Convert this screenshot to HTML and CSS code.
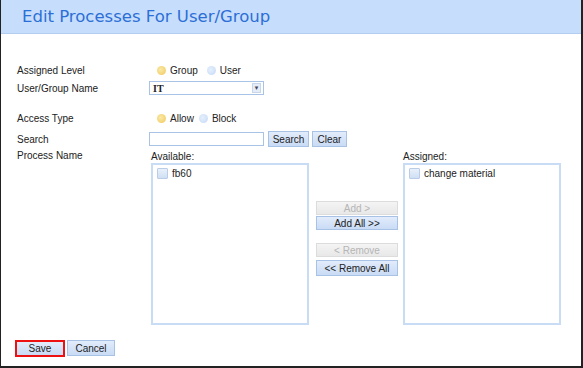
FILE: index.html
```html
<!DOCTYPE html>
<html lang="en">

<head>
    <meta charset="UTF-8">
    <title>Edit Processes For User/Group</title>
    <link rel="stylesheet" href="styles.css">
</head>

<body>
    <div class="page">
        <div class="header">
            <h1>Edit Processes For User/Group</h1>
        </div>

        <div class="content">
            <!-- niveau -->
            <div class="row row-level">
                <div class="label">Assigned Level</div>
                <div class="field">
                    <span class="radio checked"></span><span class="opt">Group</span>
                    <span class="radio"></span><span class="opt">User</span>
                </div>
            </div>

            <div class="row row-name">
                <div class="label">User/Group Name</div>
                <div class="field">
                    <div class="select">
                        <span>IT</span>
                        <span class="arrow">&#9662;</span>
                    </div>
                </div>
            </div>

            <div class="row row-access">
                <div class="label">Access Type</div>
                <div class="field">
                    <span class="radio checked"></span><span class="opt opt-tight">Allow</span>
                    <span class="radio"></span><span class="opt">Block</span>
                </div>
            </div>

            <div class="row row-search">
                <div class="label">Search</div>
                <div class="field">
                    <div class="text-input"></div>
                    <button class="btn btn-search">Search</button>
                    <button class="btn btn-clear">Clear</button>
                </div>
            </div>

            <div class="row row-process">
                <div class="label">Process Name</div>
                <div class="picker">
                    <div class="list-col">
                        <div class="list-title">Available:</div>
                        <div class="list-box">
                            <div class="item"><span class="check"></span>fb60</div>
                        </div>
                    </div>

                    <div class="mid-col">
                        <button class="btn btn-mid" disabled>Add &gt;</button>
                        <button class="btn btn-mid">Add All &gt;&gt;</button>
                        <button class="btn btn-mid btn-gap" disabled>&lt; Remove</button>
                        <button class="btn btn-mid">&lt;&lt; Remove All</button>
                    </div>

                    <div class="list-col list-right">
                        <div class="list-title">Assigned:</div>
                        <div class="list-box">
                            <div class="item"><span class="check"></span>change material</div>
                        </div>
                    </div>
                </div>
            </div>

            <div class="footer">
                <button class="btn btn-save">Save</button>
                <button class="btn btn-cancel">Cancel</button>
            </div>
        </div>
    </div>
</body>
</html>
```

FILE: styles.css
```css
body {
    margin: 0;
    font-family: "Liberation Sans", Arial, sans-serif;
    font-size: 10px;
    color: #222;
    background-color: #fff;
}

.page {
    width: 583px;
    height: 368px;
    box-sizing: border-box;
    border-left: 1px solid #222;
    border-right: 2px solid #222;
    border-bottom: 2px solid #222;
}

.header {
    height: 34px;
    background-color: #c7ddfc;
    border-bottom: 1px solid #b3cdf0;
    box-sizing: border-box;
}

h1 {
    margin: 0;
    padding-left: 21px;
    font-family: "DejaVu Sans", sans-serif;
    font-weight: normal;
    font-size: 16.5px;
    line-height: 33px;
    color: #2b6fd6;
}

.content {
    padding-left: 16px;
}

.row {
    display: flex;
    align-items: center;
}

.label {
    width: 132px;
    flex-shrink: 0;
}

.field {
    display: flex;
    align-items: center;
}

.row-level {
    margin-top: 29px;
    height: 14px;
}

.row-name {
    margin-top: 4px;
    height: 14px;
}

.row-access {
    margin-top: 16px;
    height: 14px;
}

.row-search {
    margin-top: 6px;
    height: 16px;
}

.radio {
    width: 9px;
    height: 9px;
    border-radius: 50%;
    background: radial-gradient(circle at 40% 40%, #e6f0fc, #c3d8f5);
    margin-left: 8px;
    margin-right: 0;
}

.radio.checked {
    background: radial-gradient(circle at 40% 40%, #fbe9a8, #eec95a);
}

.opt {
    margin-left: 4px;
    margin-right: 1px;
}

.opt-tight {
    margin-right: -3px;
}

.select {
    width: 115px;
    height: 14px;
    box-sizing: border-box;
    border: 1px solid #a9c3e6;
    display: flex;
    align-items: center;
    justify-content: space-between;
    padding-left: 3px;
    font-family: "Liberation Serif", serif;
    font-size: 10px;
    font-weight: bold;
}

.arrow {
    width: 9px;
    height: 10px;
    margin-right: 2px;
    background-color: #e4ecf7;
    border: 1px solid #c8d6ea;
    box-sizing: border-box;
    font-size: 7px;
    line-height: 8px;
    text-align: center;
    color: #445;
    font-family: "DejaVu Sans", sans-serif;
    font-weight: normal;
}

.text-input {
    width: 115px;
    height: 14px;
    box-sizing: border-box;
    border: 1px solid #a9c3e6;
}

.btn {
    font-family: "Liberation Sans", Arial, sans-serif;
    font-size: 10px;
    color: #222;
    height: 16px;
    padding: 0;
    border: 1px solid #a8c2e6;
    background: linear-gradient(#e2ecfb, #c9dbf5);
    box-sizing: border-box;
}

.btn:disabled {
    color: #b5b5b5;
    border-color: #dcdcdc;
    background: linear-gradient(#f4f4f4, #e8e8e8);
}

.btn-search {
    width: 41px;
    margin-left: 4px;
}

.btn-clear {
    width: 35px;
    margin-left: 3px;
}

.row-process {
    align-items: flex-start;
    margin-top: 3px;
}

.row-process .label {
    margin-top: 0;
    width: 134px;
}

.picker {
    display: flex;
}

.list-col {
    width: 158px;
}

.list-title {
    height: 12px;
    line-height: 12px;
    margin-top: 1px;
}

.list-box {
    height: 162px;
    margin-top: 0;
    box-sizing: border-box;
    border: 2px solid #c9dcf6;
    padding-top: 3px;
}

.item {
    display: flex;
    align-items: center;
    padding-left: 4px;
}

.check {
    width: 9px;
    height: 9px;
    border: 1px solid #b9cde8;
    background: linear-gradient(#e9f1fb, #cfdff4);
    border-radius: 1px;
    margin-right: 4px;
}

.mid-col {
    width: 82px;
    margin-left: 7px;
    margin-right: 5px;
    padding-top: 51px;
    display: flex;
    flex-direction: column;
}

.btn-mid {
    width: 82px;
    height: 14px;
    margin-bottom: 1px;
}

.btn-gap {
    margin-top: 12px;
    margin-bottom: 3px;
}

.btn-mid:last-child {
    height: 16px;
}

.footer {
    margin-top: 15px;
    display: flex;
}

.btn-save {
    width: 50px;
    height: 17px;
    margin-left: -2px;
    border: 2px solid #ee1111;
}

.btn-cancel {
    width: 48px;
    margin-left: 2px;
}
```
